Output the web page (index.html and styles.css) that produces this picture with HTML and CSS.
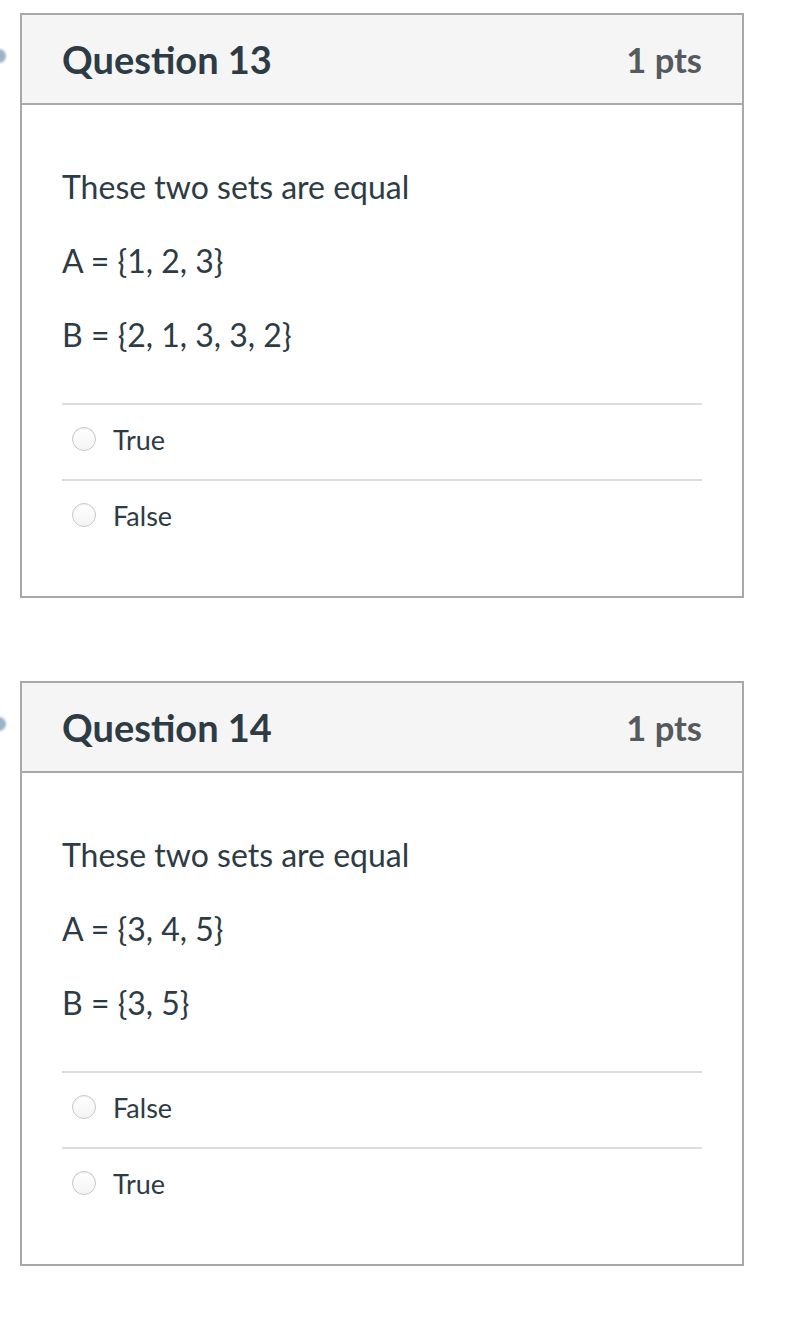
FILE: index.html
```html
<!DOCTYPE html>
<html>
<head>
<meta charset="utf-8">
<link rel="stylesheet" href="styles.css">
</head>
<body>
<div class="page">
  <div class="question">
    <span class="marker"></span>
    <div class="q-header">
      <span class="q-title">Question 13</span>
      <span class="q-pts">1 pts</span>
    </div>
    <div class="q-body">
      <p class="q-text">These two sets are equal</p>
      <p class="q-text">A = {1, 2, 3}</p>
      <p class="q-text">B = {2, 1, 3, 3, 2}</p>
      <div class="answers">
        <label class="answer"><span class="radio"></span><span class="a-text">True</span></label>
        <label class="answer"><span class="radio"></span><span class="a-text">False</span></label>
      </div>
    </div>
  </div>
  <div class="question">
    <span class="marker"></span>
    <div class="q-header">
      <span class="q-title">Question 14</span>
      <span class="q-pts">1 pts</span>
    </div>
    <div class="q-body">
      <p class="q-text">These two sets are equal</p>
      <p class="q-text">A = {3, 4, 5}</p>
      <p class="q-text">B = {3, 5}</p>
      <div class="answers">
        <label class="answer"><span class="radio"></span><span class="a-text">False</span></label>
        <label class="answer"><span class="radio"></span><span class="a-text">True</span></label>
      </div>
    </div>
  </div>
</div>
</body>
</html>
```
FILE: styles.css
```css
html, body {
  margin: 0;
  padding: 0;
  background: #ffffff;
}
body {
  font-family: Lato, "Liberation Sans", sans-serif;
  color: #2d3b45;
}
.page {
  padding: 13px 54px 0 20px;
  display: flex;
  flex-direction: column;
  gap: 83px;
}
.question {
  position: relative;
  border: 2px solid #a8a8a8;
  background: #fff;
}
.marker {
  position: absolute;
  left: -30px;
  top: 34px;
  width: 14px;
  height: 14px;
  border-radius: 50%;
  background: #9db3c8;
  filter: blur(1px);
}
.q-header {
  height: 88px;
  background: #f5f5f5;
  border-bottom: 2px solid #a8a8a8;
  display: flex;
  align-items: center;
  justify-content: space-between;
  padding: 0 40px 0 40px;
}
.q-title {
  font-weight: 700;
  font-size: 38px;
  color: #2d3b45;
}
.q-pts {
  font-weight: 700;
  font-size: 34.5px;
  color: #555a5e;
}
.q-body {
  padding: 64px 40px 41px 40px;
}
.q-text {
  margin: 0 0 38px 0;
  font-size: 32px;
  line-height: 36px;
}
.answers {
  margin-top: 50px;
}
.answer {
  display: flex;
  align-items: center;
  height: 74px;
  box-sizing: content-box;
  border-top: 2px solid #dddddd;
  padding-left: 10px;
  gap: 17px;
}
.answer .radio,
.answer .a-text {
  margin-bottom: 6px;
}
.radio {
  width: 22px;
  height: 22px;
  border-radius: 50%;
  border: 1px solid #c8c8c8;
  background: linear-gradient(#ffffff, #f4f4f4);
  box-shadow: inset 0 1px 1px rgba(0,0,0,0.06);
}
.a-text {
  font-size: 27px;
  color: #2d3b45;
}
```
